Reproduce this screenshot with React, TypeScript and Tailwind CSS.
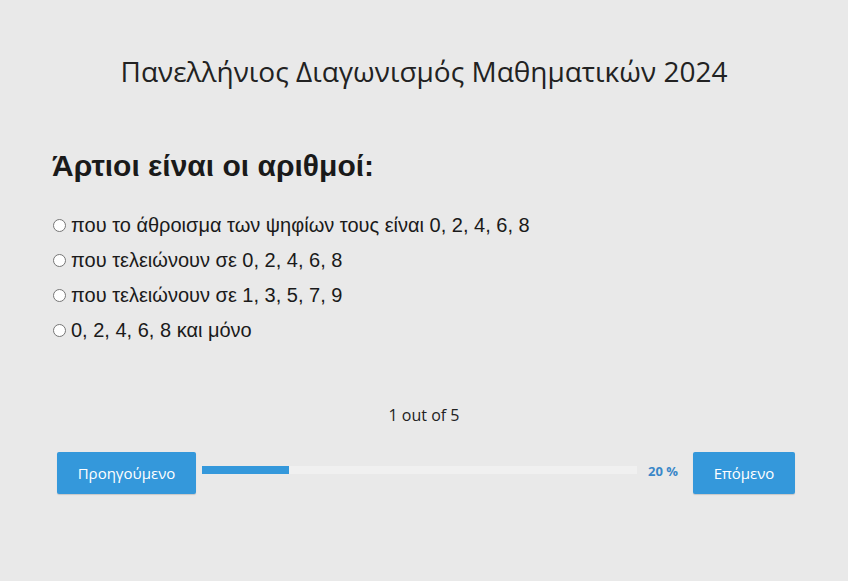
import React from "react";

const options = [
  "που το άθροισμα των ψηφίων τους είναι 0, 2, 4, 6, 8",
  "που τελειώνουν σε 0, 2, 4, 6, 8",
  "που τελειώνουν σε 1, 3, 5, 7, 9",
  "0, 2, 4, 6, 8 και μόνο",
];

export default function App() {
  const pct = 20;
  return (
    <div className="w-[848px] h-[581px] bg-[#e9e9e9] text-[#222] overflow-hidden">
      <h1 className="pt-[51px] text-center text-[28px] leading-[40px] font-normal font-['Open_Sans',sans-serif] text-[#222]">
        Πανελλήνιος Διαγωνισμός Μαθηματικών 2024
      </h1>
      <div className="pl-[52px] pt-[59px]">
        <h2 className="text-[30px] leading-[32px] font-bold font-['Liberation_Sans',Arial,sans-serif] text-[#1a1a1a]">
          Άρτιοι είναι οι αριθμοί:
        </h2>
        <div className="mt-[31px] flex flex-col gap-[11px] font-['Liberation_Sans',Arial,sans-serif] text-[20px] leading-[24px] text-[#1a1a1a]">
          {options.map((o) => (
            <label key={o} className="flex items-center">
              <span className="ml-[1px] w-[13px] h-[13px] rounded-full border border-[#767676] bg-white shrink-0" />
              <span className="ml-[5px]">{o}</span>
            </label>
          ))}
        </div>
      </div>
      <div className="mt-[61px] text-center text-[16px] leading-[24px] font-['Open_Sans',sans-serif] text-[#222]">
        1 out of 5
      </div>
      <div className="mt-[25px] pl-[57px] flex items-center font-['Open_Sans',sans-serif]">
        <button className="w-[139px] h-[42px] bg-[#3498db] text-white text-[15px] rounded-[2px] shadow-[0_1px_1px_rgba(0,0,0,0.15)]">
          Προηγούμενο
        </button>
        <div className="ml-[6px] mb-[6px] w-[435px] h-[8px] bg-[#f0f0f0]">
          <div className="h-full bg-[#3498db]" style={{ width: `${pct}%` }} />
        </div>
        <span className="ml-[11px] mb-[2px] w-[45px] text-[13px] font-bold text-[#3a87c8]">{pct} %</span>
        <button className="w-[102px] h-[42px] bg-[#3498db] text-white text-[15px] rounded-[2px] shadow-[0_1px_1px_rgba(0,0,0,0.15)]">
          Επόμενο
        </button>
      </div>
    </div>
  );
}
